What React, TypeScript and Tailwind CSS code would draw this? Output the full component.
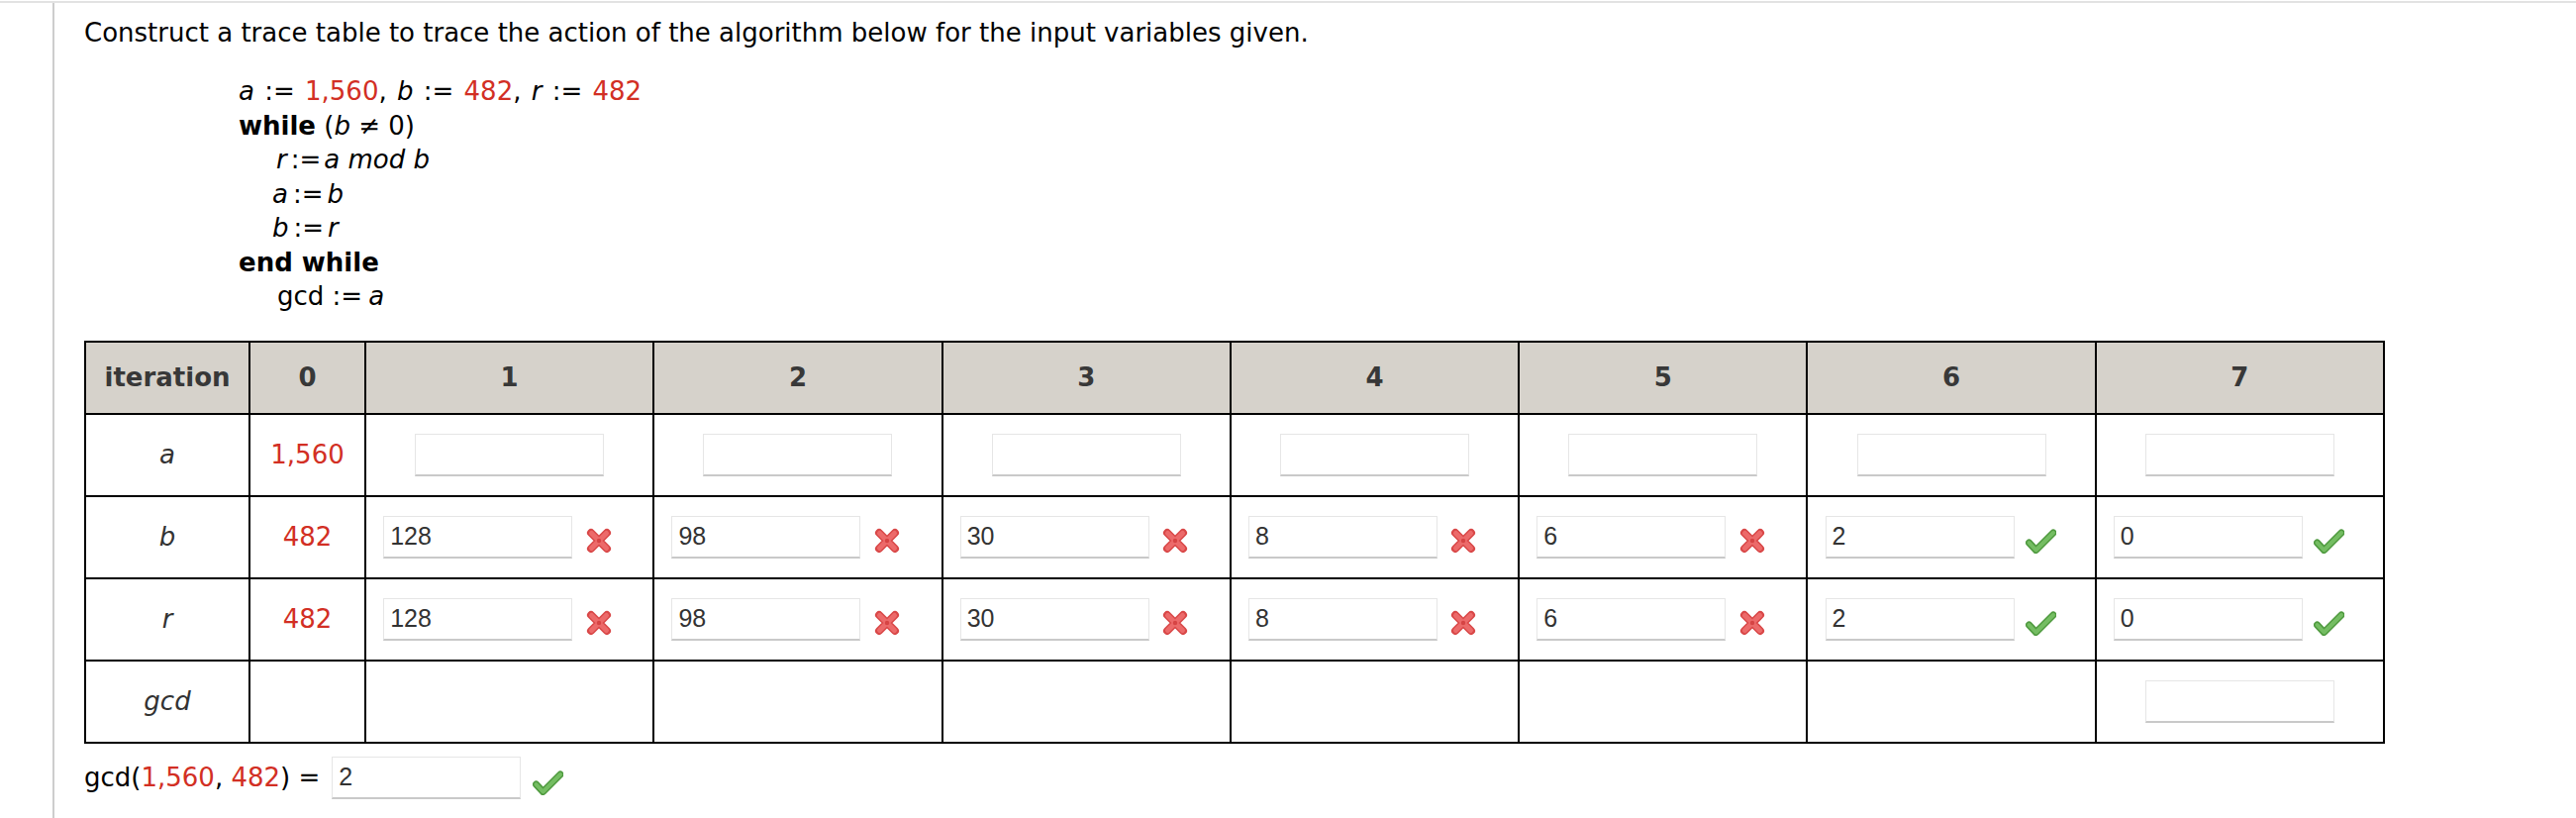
import React from 'react'

const sans = "font-['DejaVu_Sans','Verdana',sans-serif]"
const field = "font-['Liberation_Sans','Arial',sans-serif]"

function Wrong() {
  return (
    <svg width="26" height="26" viewBox="0 0 26 26" className="shrink-0">
      <path d="M5 5 L21 21 M21 5 L5 21" stroke="#d94848" strokeWidth="8" strokeLinecap="round" />
      <path d="M5.5 5.5 L20.5 20.5 M20.5 5.5 L5.5 20.5" stroke="#ec6a6a" strokeWidth="5" strokeLinecap="round" />
      <circle cx="13" cy="13" r="2.2" fill="#d64444" />
    </svg>
  )
}

function Right() {
  return (
    <svg width="31" height="25" viewBox="0 0 31 25" className="shrink-0">
      <path d="M3.5 14 L10.5 21.5 L28 4" fill="none" stroke="#4f9a3f" strokeWidth="7" strokeLinecap="round" strokeLinejoin="round" />
      <path d="M3.5 14 L10.5 21.5 L28 4" fill="none" stroke="#74bd62" strokeWidth="4" strokeLinecap="round" strokeLinejoin="round" />
    </svg>
  )
}

function Field({ value }: { value?: string }) {
  return (
    <input
      type="text"
      readOnly
      defaultValue={value ?? ''}
      className={`${field} h-[43px] w-[191px] shrink-0 border border-[#e6e6e6] border-b-2 border-b-[#c9c9c9] bg-white px-[6px] text-[25px] text-[#333] outline-none`}
    />
  )
}

function Answer({ value, ok }: { value: string; ok: boolean }) {
  return (
    <div className="flex h-full items-center justify-center">
      <Field value={value} />
      <span className="ml-[11px] mr-[22px] flex w-[31px] items-center justify-center pt-[8px]">
        {ok ? <Right /> : <Wrong />}
      </span>
    </div>
  )
}

const bValues = ['128', '98', '30', '8', '6', '2', '0']
const rValues = ['128', '98', '30', '8', '6', '2', '0']
const ok = [false, false, false, false, false, true, true]

const red = 'text-[#d22f24]'

export default function App() {
  return (
    <div className="min-h-[826px] bg-white pt-[1px] text-black">
      <div className="flex min-h-[825px] border-t-2 border-[#e2e2e2]">
        <div className="w-[53px] shrink-0" />
        <div className={`${sans} flex-1 border-l-2 border-[#cdcdcd] pl-[30px] pt-[13px]`}>
          <p className="text-[26px] leading-[34px]">
            Construct a trace table to trace the action of the algorithm below for the input variables given.
          </p>

          <div className="ml-[156px] mt-[25px] text-[26px] leading-[34.5px]">
            <div className="[word-spacing:2px]">
              <i>a</i> := <span className={red}>1,560</span>, <i>b</i> := <span className={red}>482</span>, <i>r</i> :={' '}
              <span className={red}>482</span>
            </div>
            <div>
              <b>while</b> (<i>b</i> ≠ 0)
            </div>
            <div className="pl-[38px]">
              <i>r</i>
              <span className="ml-[4px]">:=</span>
              <i className="ml-[3px]">a mod b</i>
            </div>
            <div className="pl-[34px]">
              <i>a</i>
              <span className="ml-[5px]">:=</span>
              <i className="ml-[4px]">b</i>
            </div>
            <div className="pl-[34px]">
              <i>b</i>
              <span className="ml-[5px]">:=</span>
              <i className="ml-[4px]">r</i>
            </div>
            <div>
              <b>end while</b>
            </div>
            <div className="pl-[39px]">
              gcd <span>:=</span>
              <i className="ml-[6px]">a</i>
            </div>
          </div>

          <div className="mt-[27px] grid w-[2324px] grid-cols-[164px_115px_repeat(7,minmax(0,1fr))] grid-rows-[71px_repeat(4,81px)] gap-[2px] bg-black p-[2px] text-[26px]">
            {['iteration', '0', '1', '2', '3', '4', '5', '6', '7'].map((h) => (
              <div key={h} className="flex items-center justify-center bg-[#d6d2cb] font-bold text-[#383838]">
                {h}
              </div>
            ))}

            <div className="flex items-center justify-center bg-white italic text-[#333]">a</div>
            <div className={`flex items-center justify-center bg-white ${red}`}>1,560</div>
            {[1, 2, 3, 4, 5, 6, 7].map((i) => (
              <div key={i} className="flex items-center justify-center bg-white">
                <Field />
              </div>
            ))}

            <div className="flex items-center justify-center bg-white italic text-[#333]">b</div>
            <div className={`flex items-center justify-center bg-white ${red}`}>482</div>
            {bValues.map((v, i) => (
              <div key={i} className="bg-white">
                <Answer value={v} ok={ok[i]} />
              </div>
            ))}

            <div className="flex items-center justify-center bg-white italic text-[#333]">r</div>
            <div className={`flex items-center justify-center bg-white ${red}`}>482</div>
            {rValues.map((v, i) => (
              <div key={i} className="bg-white">
                <Answer value={v} ok={ok[i]} />
              </div>
            ))}

            <div className="flex items-center justify-center bg-white italic text-[#333]">gcd</div>
            <div className="bg-white" />
            {[1, 2, 3, 4, 5, 6].map((i) => (
              <div key={i} className="bg-white" />
            ))}
            <div className="flex items-center justify-center bg-white">
              <Field />
            </div>
          </div>

          <div className="mt-[13px] flex items-center text-[26px] leading-[34px]">
            <span>
              gcd(<span className={red}>1,560</span>, <span className={red}>482</span>) =
            </span>
            <span className="ml-[12px]">
              <Field value="2" />
            </span>
            <span className="ml-[12px] pt-[10px]">
              <Right />
            </span>
          </div>
        </div>
      </div>
    </div>
  )
}
